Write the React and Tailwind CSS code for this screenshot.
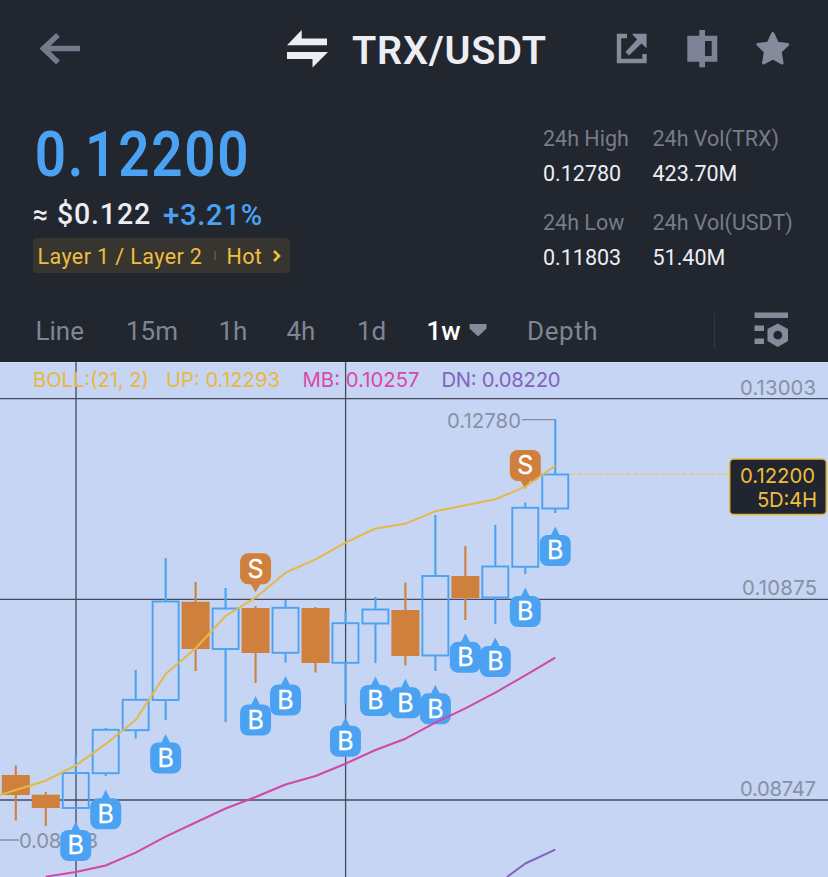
const UP = '#4ba2f2';
const DOWN = '#cf803c';

// [wick top, body top, body bottom, wick bottom, rising]
const candles = [
  [765.5, 775, 795, 820.5, false],
  [792, 794.7, 808, 826, false],
  [755.5, 772.5, 808.5, 808.5, true],
  [728, 729.3, 773.7, 776, true],
  [670, 699.3, 730.7, 738.5, true],
  [558, 601, 700.5, 720, true],
  [582, 601.7, 649, 671, false],
  [588, 608, 649.5, 722, true],
  [606, 608, 653, 683, false],
  [600, 607.3, 653.3, 662.5, true],
  [607, 608, 663, 672.5, false],
  [612, 622.7, 663.3, 704, true],
  [597, 609, 624, 663, true],
  [582.5, 610, 656, 665.5, false],
  [515, 575.5, 656, 671, true],
  [546, 576, 598, 620, false],
  [525, 566, 598, 624, true],
  [502.5, 507.3, 567.3, 574, true],
  [419.7, 474, 509, 513, true],
];

// [candle index, top of the box]
const buys = [[2, 830], [3, 798.3], [5, 742.5], [8, 704.5], [9, 684.5], [11, 725.7], [12, 685], [13, 687.3], [14, 693.3], [15, 641.7], [16, 646], [17, 596], [18, 535]];
const sells = [[8, 553.3], [17, 450]];

const cx = (n) => 15.8 + n * 29.97;
const toPoints = (ys, first) => ys.map((y, i) => `${cx(i + first)},${y}`).join(' ');
const upper = '0,795 ' + toPoints([790, 780.7, 765.5, 744, 720, 674, 648.3, 616, 597.7, 572.7, 559.3, 542.7, 528.5, 523.7, 511.3, 505.3, 499.3, 486.7, 465.7], 0);
const middle = toPoints([876.7, 872, 865.5, 852.7, 836.7, 822.5, 808.5, 797, 784.5, 776, 763.7, 750, 738.7, 722.7, 708.3, 692.7, 675.3, 657.7], 1);

function Candle({ n, d }) {
  const [wt, bt, bb, wb, rising] = d;
  const x = cx(n);
  const c = rising ? UP : DOWN;
  return (
    <g stroke={c} strokeWidth="2.1">
      <line x1={x} x2={x} y1={wt} y2={bt} />
      <line x1={x} x2={x} y1={bb} y2={wb} />
      {rising ? (
        <rect x={x - 13} y={bt + 0.5} width="26" height={bb - bt - 1} fill="none" strokeWidth="1.9" />
      ) : (
        <rect x={x - 14} y={bt} width="28" height={bb - bt} fill={c} stroke="none" />
      )}
    </g>
  );
}

function Marker({ n, y, sell }) {
  const x = cx(n);
  const tip = sell
    ? `M${x - 5} ${y + 30.5}L${x} ${y + 39}L${x + 5} ${y + 30.5}Z`
    : `M${x - 4.5} ${y + 0.5}L${x} ${y - 8.5}L${x + 4.5} ${y + 0.5}Z`;
  return (
    <g fill={sell ? DOWN : UP}>
      <path d={tip} />
      <rect x={x - 15.5} y={y} width="31" height="31" rx="8" />
      <text x={x} y={y + 24.4} textAnchor="middle" fontSize="25" fill="#fff" stroke="#fff" strokeWidth="0.3">
        {sell ? 'S' : 'B'}
      </text>
    </g>
  );
}

function Label({ x, y, w, fill = '#8791a3', children }) {
  return (
    <text x={x} y={y} textLength={w} fontSize="20.3" fill={fill}>
      {children}
    </text>
  );
}

function Chart() {
  return (
    <svg viewBox="0 362 828 515" className="block h-[515px] w-full bg-[#c5d5f3] font-['Inter',sans-serif]">
      <rect x="0" y="362" width="828" height="1" fill="#d5e1f7" />
      <g stroke="#454b5b" strokeWidth="1.3">
        <path d="M0 398.6H828M0 599.4H828M0 800H828M76 362V877M345.6 362V877" />
      </g>
      <Label x={740} y={395} w={76}>0.13003</Label>
      <Label x={742} y={595.3} w={75}>0.10875</Label>
      <Label x={740} y={796} w={76}>0.08747</Label>
      <Label x={33} y={386.8} w={116} fill="#e9b840">BOLL:(21, 2)</Label>
      <Label x={166} y={386.8} w={114} fill="#e9b840">UP: 0.12293</Label>
      <Label x={302.5} y={386.8} w={117} fill="#d84aa9">MB: 0.10257</Label>
      <Label x={441.5} y={386.8} w={119} fill="#8264bd">DN: 0.08220</Label>
      <path d="M522 419.7H556M0 840H19" stroke="#8791a3" strokeWidth="1.3" />
      <Label x={447} y={427.8} w={74}>0.12780</Label>
      <Label x={19} y={847.5} w={79}>0.08323</Label>
      {candles.map((d, n) => <Candle key={n} n={n} d={d} />)}
      {buys.map(([n, y]) => <Marker key={n} n={n} y={y} />)}
      {sells.map(([n, y]) => <Marker key={n} n={n} y={y} sell />)}
      <g fill="none" strokeWidth="2" strokeLinejoin="round">
        <polyline points={upper} stroke="#e6b844" />
        <polyline points={middle} stroke="#d148a6" />
        <polyline points="507,877 525.3,863.5 555.3,849.7" stroke="#8264bd" />
      </g>
      <path d="M570 474.3H729" stroke="#e6c878" strokeWidth="1.4" strokeDasharray="5 2" />
      <rect x="729.7" y="459" width="96.6" height="55.5" rx="4" fill="#20252f" stroke="#e8b73c" strokeWidth="1.5" />
      <Label x={740} y={482.6} w={75} fill="#f0be3e">0.12200</Label>
      <Label x={757} y={507} w={60} fill="#f0be3e">5D:4H</Label>
    </svg>
  );
}

function TopBar() {
  return (
    <div className="flex h-[98px] items-center">
      <svg className="ml-10 h-10 w-10" viewBox="40 29 40 40" fill="none" stroke="#737a8b" strokeWidth="5.5">
        <path d="M80 48.5H44M58 35L43.5 48.5L58 62.5" />
      </svg>
      <svg className="ml-[206px] h-10 w-[42px]" viewBox="286 29 42 40" fill="#eceef4">
        <path d="M287 45.3L301.7 30V38.5H327V45.3ZM287 52H328L312.5 67.5V59H287Z" />
      </svg>
      <h1 className="ml-6 w-[196px] whitespace-nowrap pt-[3px] text-[39.5px] leading-[52px] font-semibold tracking-[0.8px] text-[#eceef4]">TRX/USDT</h1>
      <svg className="ml-[67px] h-10 w-[33px]" viewBox="615 29 33 40">
        <path d="M627 36H619V61H644.5V54" fill="none" stroke="#848b9b" strokeWidth="4.4" />
        <path d="M632 33.7H646.6V48.3L641.5 43.5L629 55.5L625.5 52L637 39.5Z" fill="#848b9b" />
      </svg>
      <svg className="ml-[39px] h-10 w-[31px]" viewBox="687 29 31 40" fill="#7c8394">
        <path fillRule="evenodd" d="M687.3 35.7H699.3V30H705V35.7H717.3V61.7H705V67.3H699.3V61.7H687.3ZM705 41V56H711.7V41Z" />
      </svg>
      <svg className="ml-[38px] h-10 w-[34px]" viewBox="756 29 34 40" fill="#848b9b" stroke="#848b9b" strokeWidth="3" strokeLinejoin="round">
        <path d="M772.8 33.5L777.3 43.2L787.7 44.5L780.2 51.7L782 63L772.8 57.9L763.6 63L765.4 51.7L757.9 44.5L768.3 43.2Z" />
      </svg>
    </div>
  );
}

function Stat({ label, value }) {
  return (
    <div className="h-[84px] whitespace-nowrap text-[21.5px]">
      <div className="h-[35px] leading-[35px] text-[#767c8a]">{label}</div>
      <div className="h-[35px] leading-[36px] text-[#eceef4]">{value}</div>
    </div>
  );
}

function Summary() {
  return (
    <div className="flex h-[200px]">
      <div className="ml-[33px] w-[510px] pt-[22px]">
        <div className="h-[68px] origin-left scale-x-[0.87] whitespace-nowrap pl-[2px] text-[63px] leading-[70px] font-semibold tracking-[2px] text-[#4ba2f2]">0.12200</div>
        <div className="flex h-[50px] items-center whitespace-nowrap pt-[3px] text-[30px] leading-[50px] font-medium">
          <span className="w-[130px] origin-left scale-x-[0.95] tracking-[0.9px] text-[#eceef4]"><span className="text-[28px]">≈</span> $0.122</span>
          <span className="origin-left scale-x-[0.97] tracking-[0.8px] text-[#4ba2f2]">+3.21%</span>
        </div>
        <div className="flex h-[35px] w-[257px] items-center rounded-[4px] bg-[#37352f] pl-[4.5px] text-[21.5px] leading-[35px] whitespace-nowrap text-[#f0be3e]">
          <span className="w-[176px] pt-[2px] tracking-[0.4px]">Layer 1 / Layer 2</span>
          <span className="h-[9px] w-[2px] bg-[#5d522f]" />
          <span className="ml-[11px] w-[46px] pt-[2px] tracking-[0.3px]">Hot</span>
          <svg className="h-3 w-2" viewBox="0 0 8 12" fill="none" stroke="#f0be3e" strokeWidth="2.6"><path d="M1 1L6 6L1 11" /></svg>
        </div>
      </div>
      <div className="grid w-[260px] grid-cols-[109.5px_auto] content-start pt-[23px]">
        <Stat label="24h High" value="0.12780" />
        <Stat label="24h Vol(TRX)" value="423.70M" />
        <Stat label="24h Low" value="0.11803" />
        <Stat label="24h Vol(USDT)" value="51.40M" />
      </div>
    </div>
  );
}

function Intervals() {
  return (
    <div className="flex h-16 items-center whitespace-nowrap pl-[35.5px] text-[26px] leading-[64px] text-[#7e8594]">
      <span className="w-[90.5px] pt-px">Line</span>
      <span className="w-[92.5px] pt-px">15m</span>
      <span className="w-[68px] pt-px">1h</span>
      <span className="w-[70.5px] pt-px">4h</span>
      <span className="w-[69.5px] pt-px">1d</span>
      <span className="w-[42px] pt-px font-medium text-white">1w</span>
      <svg className="h-[13px] w-[18px]" viewBox="0 0 18 13" fill="#848b9b"><path d="M0.5 0H17.5V4.5L9 12.5L0.5 4.5Z" /></svg>
      <span className="ml-[40.5px] w-[187px] pt-px tracking-[0.6px]">Depth</span>
      <span className="h-[35px] w-px bg-[#333843]" />
      <svg className="ml-[38.5px] h-9 w-[34px]" viewBox="754 312 34 36" fill="#848b9b">
        <path fillRule="evenodd" d="M754.5 312.5H788V318H754.5ZM754.5 325.5H764V331H754.5ZM754.5 338.5H764V344H754.5ZM777.8 323.5L788 329V341L777.8 347L767.5 341V329ZM777.8 330.8A4.4 4.4 0 1 0 777.8 339.6A4.4 4.4 0 1 0 777.8 330.8Z" />
      </svg>
    </div>
  );
}

export default function App() {
  return (
    <main className="h-[877px] w-[828px] overflow-hidden bg-[#22262f] font-['Roboto',sans-serif]">
      <TopBar />
      <Summary />
      <Intervals />
      <Chart />
    </main>
  );
}
